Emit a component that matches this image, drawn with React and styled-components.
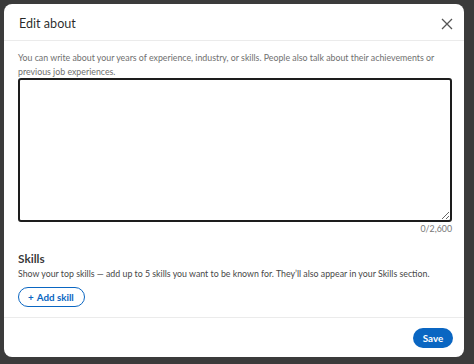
import React, { useState } from "react";
import styled, { createGlobalStyle } from "styled-components";

const Global = createGlobalStyle`
  html, body {
    margin: 0;
    padding: 0;
    background: #3b3b3b;
  }
  body {
    font-family: Lato, "Noto Sans", Arial, sans-serif;
  }
`;

const Page = styled.div`
  width: 474px;
  height: 364px;
  padding: 4px 10px 7px 4px;
  box-sizing: border-box;
  background: #3b3b3b;
`;

const Modal = styled.div`
  width: 460px;
  height: 353px;
  background: #fff;
  border-radius: 8px;
  display: flex;
  flex-direction: column;
  overflow: hidden;
`;

const Header = styled.div`
  height: 37px;
  box-sizing: border-box;
  padding: 3px 5px 0 15px;
  display: flex;
  align-items: center;
  justify-content: space-between;
  border-bottom: 1px solid #ebebeb;
`;

const Title = styled.h2`
  margin: 0;
  font-size: 12.6px;
  font-weight: 400;
  color: rgba(0, 0, 0, 0.85);
`;

const Close = styled.button`
  width: 24px;
  height: 24px;
  border: 0;
  background: none;
  padding: 0;
  display: flex;
  align-items: center;
  justify-content: center;
  color: #555;
  cursor: pointer;
`;

const Body = styled.div`
  flex: 1;
  padding: 10px 11px 0 14px;
`;

const Hint = styled.p`
  margin: 0;
  font-size: 8.8px;
  line-height: 13.5px;
  color: #6f6f6f;
`;

const Area = styled.textarea`
  display: block;
  width: 434px;
  height: 144px;
  box-sizing: border-box;
  border: 2px solid #1d1d1d;
  border-radius: 3px;
  padding: 4px 6px;
  font-family: inherit;
  font-size: 11px;
  resize: vertical;
  outline: none;
`;

const Counter = styled.div`
  width: 434px;
  text-align: right;
  font-size: 8.8px;
  line-height: 13px;
  color: #777;
`;

const SkillsTitle = styled.h3`
  margin: 16px 0 0;
  font-size: 11.8px;
  font-weight: 700;
  line-height: 16px;
  color: rgba(0, 0, 0, 0.8);
`;

const SkillsText = styled.p`
  margin: 0 0 6px;
  font-size: 8.8px;
  line-height: 14px;
  color: #474747;
`;

const AddSkill = styled.button`
  height: 20px;
  padding: 0 10px 0 9px;
  border: 1px solid #0a66c2;
  border-radius: 999px;
  background: #fff;
  color: #0a66c2;
  font-family: inherit;
  font-size: 9.8px;
  font-weight: 700;
  display: flex;
  align-items: center;
  gap: 3px;
  cursor: pointer;
`;

const Footer = styled.div`
  height: 39px;
  border-top: 1px solid #ebebeb;
  display: flex;
  align-items: center;
  justify-content: flex-end;
  padding: 0 11px;
`;

const Save = styled.button`
  height: 20px;
  width: 40px;
  padding: 0;
  border: 0;
  border-radius: 999px;
  background: #0a66c2;
  color: #fff;
  font-family: inherit;
  font-size: 9.8px;
  font-weight: 700;
  cursor: pointer;
`;

export default function App() {
  const [text, setText] = useState("");
  return (
    <Page>
      <Global />
      <Modal>
        <Header>
          <Title>Edit about</Title>
          <Close aria-label="Dismiss">
            <svg width="14" height="14" viewBox="0 0 14 14">
              <path d="M2 2 L12 12 M12 2 L2 12" stroke="currentColor" strokeWidth="1.3" />
            </svg>
          </Close>
        </Header>
        <Body>
          <Hint>
            You can write about your years of experience, industry, or skills. People also talk about their achievements or previous job experiences.
          </Hint>
          <Area value={text} onChange={(e) => setText(e.target.value)} autoFocus />
          <Counter>{text.length}/2,600</Counter>
          <SkillsTitle>Skills</SkillsTitle>
          <SkillsText>
            Show your top skills — add up to 5 skills you want to be known for. They’ll also appear in your Skills section.
          </SkillsText>
          <AddSkill>
            <span>+</span> Add skill
          </AddSkill>
        </Body>
        <Footer>
          <Save>Save</Save>
        </Footer>
      </Modal>
    </Page>
  );
}
